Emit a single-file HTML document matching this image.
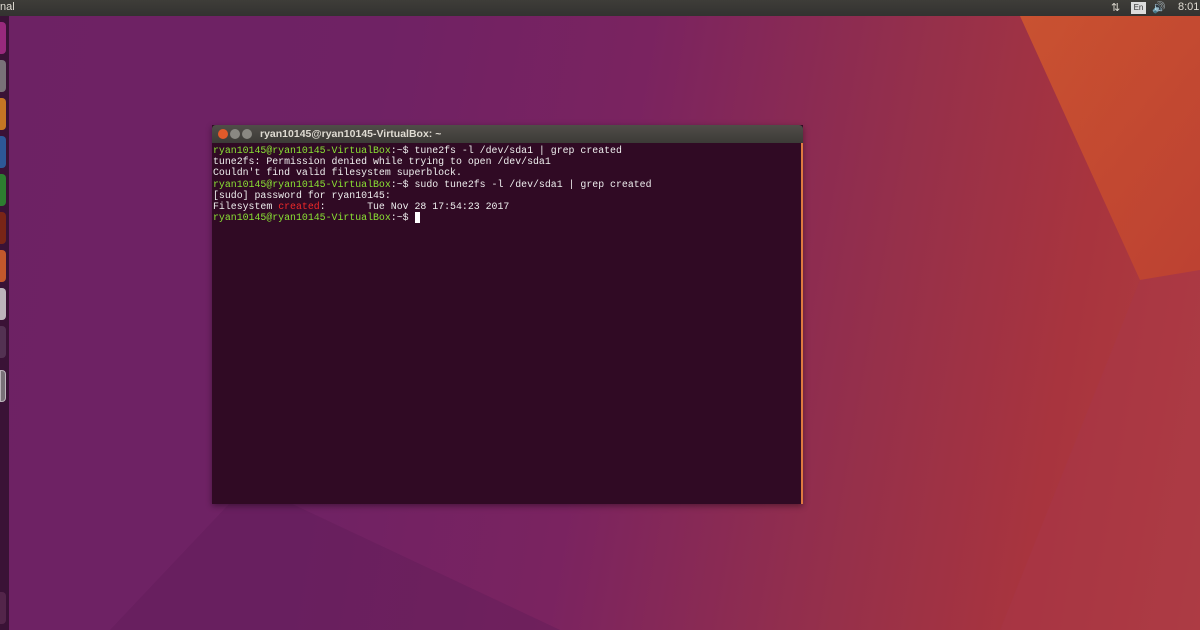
<!DOCTYPE html>
<html><head><style>
*{margin:0;padding:0;box-sizing:border-box}
body{width:1200px;height:630px;overflow:hidden;position:relative;font-family:"Liberation Sans",sans-serif;
background:linear-gradient(100deg,#6d2264 0%,#6f2264 30%,#7a2360 50%,#96304a 72%,#a8343e 86%,#b13f40 100%);}
#top{position:absolute;left:0;top:0;width:1200px;height:16px;background:linear-gradient(#3e3d39,#333230);color:#dfdbd2;font-size:11px;white-space:nowrap}
#launch{position:absolute;left:0;top:16px;width:9px;height:614px;background:#3a1236;}
.ic{position:absolute;left:0;width:6px;height:32px;border-radius:0 4px 4px 0;opacity:.8}
#term{position:absolute;left:212px;top:125px;width:591px;height:379px;background:#300a24;box-shadow:0 2px 6px rgba(0,0,0,.4)}
#tb{height:18px;background:linear-gradient(#504d48,#3c3b37);border-radius:4px 4px 0 0;color:#dfdbd2;font-size:10.5px;font-weight:bold;line-height:18px;padding-left:48px;position:relative}
.b{position:absolute;top:4px;width:10px;height:10px;border-radius:50%}
pre{font-family:"Liberation Mono",monospace;font-size:9.9px;line-height:11.2px;color:#eee;padding:2px 0 0 1px}
.g{color:#8ae234}.r{color:#ef2929}
</style></head><body>
<svg style="position:absolute;left:0;top:0" width="1200" height="630">
<defs><linearGradient id="o" x1="0" y1="0" x2="1" y2="1"><stop offset="0" stop-color="#d45a2c"/><stop offset="1" stop-color="#c0432f"/></linearGradient></defs>
<polygon points="1020,16 1200,16 1200,270 1140,280" fill="url(#o)" opacity=".8"/>
<polygon points="1140,280 1200,270 1200,630 1000,630" fill="#a8384a" opacity=".4"/>
<polygon points="230,503 290,503 560,630 110,630" fill="#5f1c58" opacity=".4"/>
</svg>
<div id="top"><span style="position:absolute;left:0;top:1px">nal</span>
<span style="position:absolute;left:1111px;top:1px;font-size:11px">⇅</span>
<span style="position:absolute;left:1131px;top:2px;width:15px;height:12px;background:#dcdcdc;color:#333;font-size:8px;text-align:center;line-height:12px">En</span>
<span style="position:absolute;left:1152px;top:1px">🔊</span>
<span style="position:absolute;left:1178px;top:1px">8:01 P</span></div>
<div id="launch">
<div class="ic" style="top:6px;background:#b0308e"></div>
<div class="ic" style="top:44px;background:#8a8a8a"></div>
<div class="ic" style="top:82px;background:#e89020"></div>
<div class="ic" style="top:120px;background:#2a6ab0"></div>
<div class="ic" style="top:158px;background:#2a9a30"></div>
<div class="ic" style="top:196px;background:#8a2a10"></div>
<div class="ic" style="top:234px;background:#e66a2a"></div>
<div class="ic" style="top:272px;background:#ddd"></div>
<div class="ic" style="top:310px;background:#5a3a5a"></div>
<div class="ic" style="top:354px;background:#888;border:1px solid #ddd"></div>
<div class="ic" style="top:576px;background:#5a2a50"></div>
</div>
<div id="term">
<div id="tb"><span class="b" style="left:6px;background:#e25a2a"></span><span class="b" style="left:18px;background:#8a8882"></span><span class="b" style="left:30px;background:#8a8882"></span>ryan10145@ryan10145-VirtualBox: ~</div>
<div style="position:absolute;right:0;top:18px;width:2px;height:361px;background:#e07a40"></div>
<pre><span class="g">ryan10145@ryan10145-VirtualBox</span>:~$ tune2fs -l /dev/sda1 | grep created
tune2fs: Permission denied while trying to open /dev/sda1
Couldn't find valid filesystem superblock.
<span class="g">ryan10145@ryan10145-VirtualBox</span>:~$ sudo tune2fs -l /dev/sda1 | grep created
[sudo] password for ryan10145:
Filesystem <span class="r">created</span>:       Tue Nov 28 17:54:23 2017
<span class="g">ryan10145@ryan10145-VirtualBox</span>:~$ <span style="background:#fff">&nbsp;</span></pre>
</div>
</body></html>
